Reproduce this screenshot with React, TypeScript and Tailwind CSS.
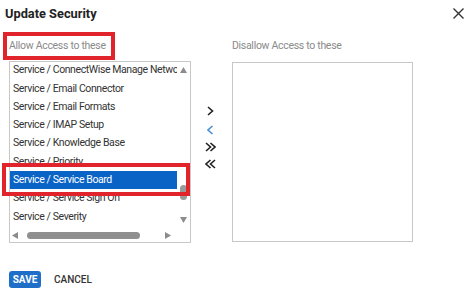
import React from 'react';

const items = [
  'Service / ConnectWise Manage Network',
  'Service / Email Connector',
  'Service / Email Formats',
  'Service / IMAP Setup',
  'Service / Knowledge Base',
  'Service / Priority',
  'Service / Service Board',
  'Service / Service Sign On',
  'Service / Severity',
];

const Tri = ({ dir }: { dir: 'up' | 'down' | 'left' | 'right' }) => {
  const pts = {
    up: '0,6 3.5,0 7,6',
    down: '0,0 3.5,6 7,0',
    left: '6,0 0,3.5 6,7',
    right: '0,0 6,3.5 0,7',
  }[dir];
  const vertical = dir === 'up' || dir === 'down';
  return (
    <svg width={vertical ? 7 : 6} height={vertical ? 6 : 7} className="shrink-0">
      <polygon points={pts} fill="#8c8c8c" />
    </svg>
  );
};

const Chevron = ({ dir, double, color }: { dir: 'left' | 'right'; double?: boolean; color: string }) => {
  const one = (x: number) =>
    dir === 'right' ? `M${x} 1 L${x + 4.5} 5 L${x} 9` : `M${x + 4.5} 1 L${x} 5 L${x + 4.5} 9`;
  return (
    <svg width={double ? 11 : 7} height={10} fill="none" stroke={color} strokeWidth={1.6}>
      <path d={one(1)} />
      {double && <path d={one(5.5)} />}
    </svg>
  );
};

const App = () => {
  return (
    <div className="w-[474px] h-[304px] bg-white flex flex-col font-['Roboto','Liberation_Sans',sans-serif] text-[#333]">
      {/* Header */}
      <div className="h-[32px] flex items-start justify-between pl-[5px] pr-[10px]">
        <h1 className="pt-[6px] text-[12.8px] leading-[16px] font-bold text-[#222]">Update Security</h1>
        <svg width="11" height="11" className="mt-[8px]" stroke="#333" strokeWidth="1.4">
          <path d="M0.5 0.5 L10.5 10.5 M10.5 0.5 L0.5 10.5" />
        </svg>
      </div>

      <div className="flex">
        {/* Left column */}
        <div className="flex flex-col pl-[3px]">
          <div className="w-[112px] h-[28px] border-4 border-[#e1232b] flex items-center pl-[2px] text-[10.5px] tracking-[-0.3px] text-[#8a8a8a] whitespace-nowrap">
            Allow Access to these
          </div>
          <div className="ml-[6px] mt-[1px] w-[182px] h-[182px] border border-[#c8c8c8] flex relative">
            <div className="flex flex-col w-[167px]">
              <div className="flex-1 overflow-hidden">
                <div className="-mt-[1px]">
                  {items.map((it, i) => (
                    <div
                      key={it}
                      className={`h-[18.3px] flex items-center pl-[3px] text-[10.5px] tracking-[-0.4px] whitespace-nowrap overflow-hidden ${
                        i === 6 ? 'bg-[#0a64c6] text-white' : 'text-[#333]'
                      }`}
                    >
                      {it}
                    </div>
                  ))}
                </div>
              </div>
              <div className="h-[14px] flex items-center pl-[2px]">
                <Tri dir="left" />
                <div className="ml-[9px] w-[113px] h-[7px] rounded-full bg-[#8f8f8f]" />
                <div className="ml-[25px]">
                  <Tri dir="right" />
                </div>
              </div>
            </div>
            <div className="w-[13px] flex flex-col items-center pt-[5px]">
              <Tri dir="up" />
              <div className="mt-[112px] w-[7px] h-[15px] rounded-full bg-[#9a9a9a]" />
              <div className="mt-[17px]">
                <Tri dir="down" />
              </div>
            </div>
            {/* annotation */}
            <div className="absolute left-[-8px] top-[101px] w-[188px] h-[33px] border-4 border-[#e1232b] pointer-events-none" />
          </div>
        </div>

        {/* Middle arrows */}
        <div className="w-[41px] flex flex-col items-center pt-[74px] pr-[2px]">
          <Chevron dir="right" color="#222" />
          <div className="mt-[9px]">
            <Chevron dir="left" color="#4a8fd0" />
          </div>
          <div className="mt-[7px]">
            <Chevron dir="right" double color="#222" />
          </div>
          <div className="mt-[7px]">
            <Chevron dir="left" double color="#222" />
          </div>
        </div>

        {/* Right column */}
        <div className="flex flex-col">
          <div className="h-[28px] flex items-center text-[10.5px] tracking-[-0.3px] text-[#8a8a8a] whitespace-nowrap">
            Disallow Access to these
          </div>
          <div className="mt-[2px] w-[181px] h-[180px] border border-[#c8c8c8]" />
        </div>
      </div>

      {/* Footer */}
      <div className="flex items-center pl-[9px] mt-[28px] gap-[13px]">
        <button className="w-[32px] h-[17px] rounded-[3px] bg-[#1f6fc9] text-white text-[10px] font-bold leading-none">
          SAVE
        </button>
        <button className="text-[10px] font-medium text-[#333] leading-none">CANCEL</button>
      </div>
    </div>
  );
};

export default App;
